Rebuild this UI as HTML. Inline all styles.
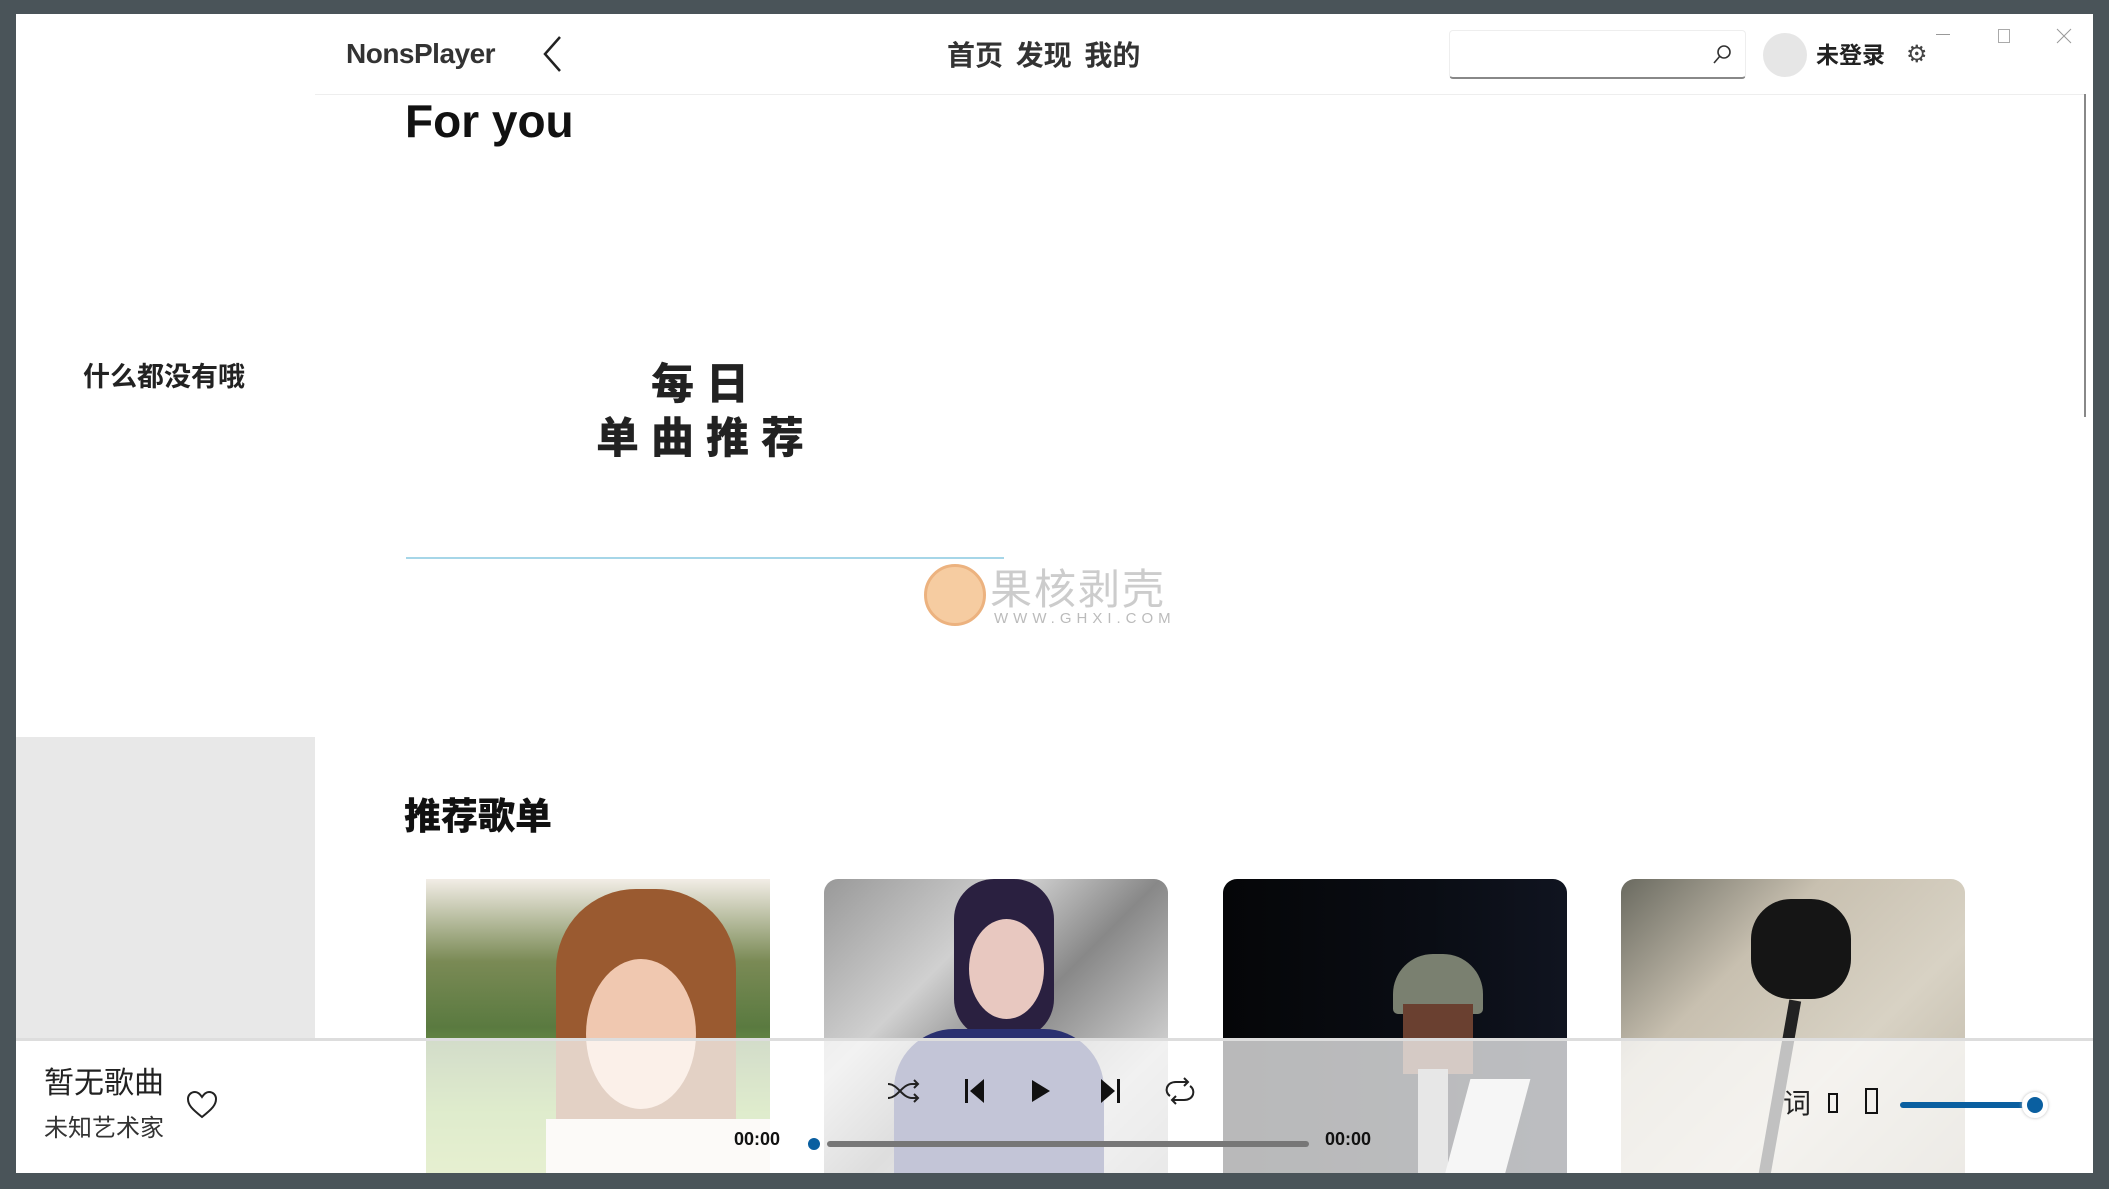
<!DOCTYPE html>
<html><head><meta charset="utf-8"><style>
*{margin:0;padding:0;box-sizing:border-box}
body{width:2109px;height:1189px;background:#4a5459;position:relative;overflow:hidden;font-family:"Liberation Sans","Noto Sans CJK SC",sans-serif;color:#111}
.win{position:absolute;left:16px;top:14px;width:2077px;height:1159px;background:#fff;overflow:hidden}
.a{position:absolute}
.cjk{font-family:"Noto Sans CJK SC",sans-serif;line-height:1}
.card{position:absolute;top:865px;width:344px;height:330px;border-radius:14px;overflow:hidden}
</style></head><body>
<div class="win">
  <div class="a" style="left:0;top:723px;width:299px;height:301px;background:#e8e8e8"></div>
  <div class="a cjk" style="left:67px;top:347px;font-size:27px;font-weight:700;color:#222">什么都没有哦</div>
  <div class="a" style="left:330px;top:24px;font-size:28px;font-weight:700;color:#333;letter-spacing:-0.5px">NonsPlayer</div>
  <svg class="a" style="left:524px;top:20px" width="24" height="40" viewBox="0 0 24 40"><path d="M20 3 L5 20 L20 37" fill="none" stroke="#222" stroke-width="2.5"/></svg>
  <div class="a cjk" style="left:931px;top:26px;font-size:28px;font-weight:700;color:#333">首页&nbsp; 发现&nbsp; 我的</div>
  <div class="a" style="left:299px;top:80px;width:1770px;height:1px;background:#eee"></div>
  <div class="a" style="left:1433px;top:16px;width:297px;height:49px;background:#fff;border:1px solid #eee;border-bottom:2px solid #888;border-radius:4px"></div>
  <svg class="a" style="left:1695px;top:30px" width="22" height="22" viewBox="0 0 22 22"><circle cx="13" cy="8" r="6" fill="none" stroke="#333" stroke-width="1.6"/><path d="M9 12 L3 19" stroke="#333" stroke-width="1.6"/></svg>
  <div class="a" style="left:1747px;top:19px;width:44px;height:44px;border-radius:50%;background:#e6e6e6"></div>
  <div class="a cjk" style="left:1800px;top:28px;font-size:23px;font-weight:700;color:#222">未登录</div>
  <div class="a" style="left:1890px;top:26px;font-size:24px;color:#444">⚙</div>
  <div class="a" style="left:1920px;top:20px;width:14px;height:1px;background:#999"></div>
  <div class="a" style="left:1982px;top:15px;width:12px;height:14px;border:1px solid #aaa"></div>
  <svg class="a" style="left:2040px;top:14px" width="16" height="16"><path d="M1 1 L15 15 M15 1 L1 15" stroke="#999" stroke-width="1"/></svg>
  <div class="a" style="left:2068px;top:80px;width:2px;height:323px;background:#888"></div>
  <div class="a" style="left:389px;top:80px;font-size:46px;font-weight:900;color:#111">For you</div>
  <div class="a" style="left:560px;top:340px;width:260px;text-align:center;font-family:'Noto Sans CJK SC',sans-serif;font-size:43px;font-weight:900;letter-spacing:12px;line-height:54px;color:#222">每日<br>单曲推荐</div>
  <div class="a" style="left:390px;top:543px;width:598px;height:2px;background:#a6d6e8"></div>
  <div class="a" style="left:908px;top:550px;width:62px;height:62px;border-radius:50%;background:#f5c08a;border:3px solid #e8a060;opacity:.8"></div>
  <div class="a cjk" style="left:974px;top:552px;font-size:42px;color:#ccc;letter-spacing:2px">果核剥壳</div>
  <div class="a" style="left:978px;top:596px;font-size:15px;color:#bbb;letter-spacing:5px">WWW.GHXI.COM</div>
  <div class="a cjk" style="left:388px;top:781px;font-size:37px;font-weight:900;color:#111">推荐歌单</div>
  <div class="card" style="left:410px;border-radius:0;background:linear-gradient(180deg,#f2ede6 0%,#7a8a55 25%,#5a7a40 45%,#8ab84a 70%,#b5d060 100%)">
    <div class="a" style="left:130px;top:10px;width:180px;height:330px;border-radius:80px 80px 0 0;background:#9a5a30"></div>
    <div class="a" style="left:160px;top:80px;width:110px;height:150px;border-radius:50%;background:#f0c8b0"></div>
    <div class="a" style="left:120px;top:240px;width:224px;height:100px;background:#f2ede4"></div>
  </div>
  <div class="card" style="left:808px;background:linear-gradient(135deg,#999 0%,#d0d0d0 30%,#888 50%,#ccc 75%,#aaa 100%)">
    <div class="a" style="left:130px;top:0;width:100px;height:160px;border-radius:40px;background:#2a2040"></div>
    <div class="a" style="left:145px;top:40px;width:75px;height:100px;border-radius:50%;background:#e8c8c0"></div>
    <div class="a" style="left:70px;top:150px;width:210px;height:180px;border-radius:60px 60px 0 0;background:#2a3070"></div>
  </div>
  <div class="card" style="left:1207px;background:linear-gradient(90deg,#050608,#0a0d14 60%,#101420)">
    <div class="a" style="left:170px;top:75px;width:90px;height:60px;border-radius:40px 40px 5px 5px;background:#7a8070"></div>
    <div class="a" style="left:180px;top:125px;width:70px;height:70px;background:#6a4030"></div>
    <div class="a" style="left:195px;top:190px;width:30px;height:140px;background:#aaa"></div>
    <div class="a" style="left:230px;top:200px;width:60px;height:130px;background:#ddd;transform:skewX(-15deg)"></div>
  </div>
  <div class="card" style="left:1605px;background:linear-gradient(135deg,#6a6a60,#c8c0b0 30%,#d8d2c4 60%,#b8b0a0)">
    <div class="a" style="left:130px;top:20px;width:100px;height:100px;border-radius:40%;background:#151515"></div>
    <div class="a" style="left:150px;top:120px;width:12px;height:210px;background:#222;transform:rotate(10deg)"></div>
  </div>
  <div class="a" style="left:0;top:1024px;width:2077px;height:135px;background:rgba(255,255,255,.72);border-top:3px solid #ddd"></div>
  <div class="a cjk" style="left:28px;top:1051px;font-size:30px;color:#222">暂无歌曲</div>
  <div class="a cjk" style="left:28px;top:1100px;font-size:24px;color:#333">未知艺术家</div>
  <svg class="a" style="left:170px;top:1076px" width="32" height="30" viewBox="0 0 32 30"><path d="M16 27 C6 19 2 15 2 9 C2 5 5 2 9 2 C12 2 14 4 16 7 C18 4 20 2 23 2 C27 2 30 5 30 9 C30 15 26 19 16 27Z" fill="none" stroke="#222" stroke-width="2"/></svg>
  <svg class="a" style="left:870px;top:1062px" width="320" height="30" viewBox="0 0 320 30">
    <g fill="none" stroke="#222" stroke-width="2"><path d="M2 8 C12 8 16 22 26 22 L32 22 M2 22 C12 22 16 8 26 8 L32 8 M28 4 L32 8 L28 12 M28 18 L32 22 L28 26"/></g>
    <rect x="79" y="3" width="3" height="24" fill="#111"/><path d="M98 3 L84 15 L98 27Z" fill="#111"/>
    <path d="M146 4 L164 15 L146 26Z" fill="#111"/>
    <path d="M215 3 L229 15 L215 27Z" fill="#111"/><rect x="231" y="3" width="3" height="24" fill="#111"/>
    <g fill="none" stroke="#222" stroke-width="2"><path d="M284 20 C278 16 280 6 290 6 L302 6 M298 2 L302 6 L298 10 M304 10 C310 14 308 24 298 24 L286 24 M290 20 L286 24 L290 28"/></g>
  </svg>
  <div class="a" style="left:718px;top:1115px;font-size:18px;font-weight:700;color:#111">00:00</div>
  <div class="a" style="left:811px;top:1127px;width:482px;height:6px;border-radius:3px;background:#777"></div>
  <div class="a" style="left:789px;top:1121px;width:18px;height:18px;border-radius:50%;background:#0a5fa0;border:3px solid #fff"></div>
  <div class="a" style="left:1309px;top:1115px;font-size:18px;font-weight:700;color:#111">00:00</div>
  <div class="a cjk" style="left:1767px;top:1074px;font-size:28px;color:#222">词</div>
  <div class="a" style="left:1812px;top:1079px;width:10px;height:20px;border:2px solid #111"></div>
  <div class="a" style="left:1849px;top:1074px;width:13px;height:26px;border:2px solid #111"></div>
  <div class="a" style="left:1884px;top:1088px;width:135px;height:6px;border-radius:3px;background:#0a5fa0"></div>
  <div class="a" style="left:2006px;top:1078px;width:26px;height:26px;border-radius:50%;background:#0a5fa0;border:5px solid #fff;box-shadow:0 0 3px #bbb"></div>
</div>
</body></html>
